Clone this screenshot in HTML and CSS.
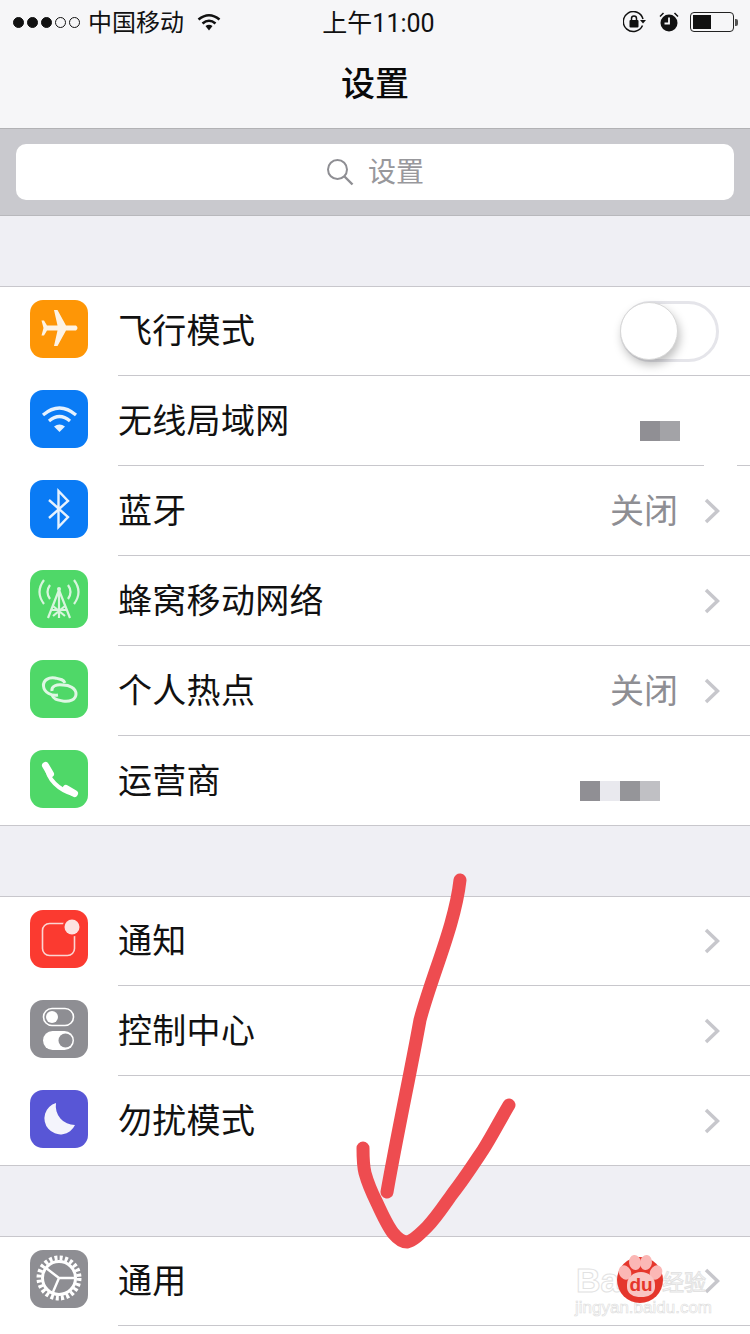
FILE: index.html
```html
<!DOCTYPE html>
<html>
<head>
	<meta charset="utf-8">
	<title>设置</title>
	<link rel="stylesheet" href="styles.css">
</head>
<body>
	<div id="page">
		<div class="top">
			<div class="status">
				<div class="status-left">
					<span class="dots">
						<i class="dot"></i><i class="dot"></i><i class="dot"></i><i class="dot off"></i><i class="dot off"></i>
					</span>
					<span class="carrier">中国移动</span>
					<svg class="st-wifi" width="24" height="18" viewBox="0 0 24 18">
						<path d="M1.500 6.500Q12-2 22.500 6.500" fill="none" stroke="#111" stroke-width="2.600"/>
						<path d="M5.500 10.500Q12 5 18.500 10.500" fill="none" stroke="#111" stroke-width="2.600"/>
						<path d="M8.500 13Q12 10.500 15.500 13L12 17.500Z" fill="#111"/>
					</svg>
				</div>
				<div class="time">上午11:00</div>
				<div class="status-right">
					<svg width="24" height="22" viewBox="0 0 24 22">
						<path d="M19.500 14.500A10 10 0 1 1 20 8" fill="none" stroke="#111" stroke-width="1.500"/>
						<path d="M17 9h6l-3 3.500Z" fill="#111"/>
						<rect x="6.500" y="9" width="9" height="7.500" rx="1" fill="#111"/>
						<path d="M8.500 9.500V7.500a2.500 2.500 0 0 1 5 0v2" fill="none" stroke="#111" stroke-width="1.500"/>
					</svg>
					<svg class="st-alarm" width="20" height="20" viewBox="0 0 20 20">
						<circle cx="10" cy="11" r="8.500" fill="#111"/>
						<path d="M10 5.500V11.500H5.500" fill="none" stroke="#f6f6f8" stroke-width="1.800"/>
						<path d="M1 4.500L4.500 1M19 4.500L15.500 1" stroke="#111" stroke-width="1.500"/>
					</svg>
					<div class="battery"><div class="battery-fill"></div></div>
					<div class="battery-nub"></div>
				</div>
			</div>
			<div class="title">设置</div>
		</div>

		<div class="search">
			<div class="search-box">
				<svg width="28" height="28" viewBox="0 0 28 28">
					<circle cx="11.500" cy="11.500" r="9.500" fill="none" stroke="#8e8e93" stroke-width="2"/>
					<path d="M18.500 18.500L26.500 26.500" stroke="#8e8e93" stroke-width="2.400"/>
				</svg>
				<span class="search-text">设置</span>
			</div>
		</div>

		<div class="group">
			<div class="row">
				<div class="icon orange">
					<svg width="58" height="58" viewBox="0 0 58 58">
						<path d="M46 25.500H36L27.500 10H24L27.500 25.500H17L14 20.500H11.500L13.500 28L11.500 35.500H14L17 30.500H27.500L24 46H27.500L36 30.500H46Q49 28 46 25.500Z" fill="#fdf3e4"/>
					</svg>
				</div>
				<div class="body">
					<span class="label">飞行模式</span>
					<div class="toggle"><div class="knob"></div></div>
				</div>
			</div>
			<div class="row">
				<div class="icon blue">
					<svg width="58" height="58" viewBox="0 0 58 58" fill="none" stroke="#e6f2fe" stroke-width="3.200">
						<path d="M13 25Q29.500 11 46 25"/>
						<path d="M19 31Q29.500 22 40 31"/>
						<path d="M24 36.500Q29.500 32.500 35 36.500L29.500 42Z" fill="#e6f2fe" stroke="none"/>
					</svg>
				</div>
				<div class="body">
					<span class="label">无线局域网</span>
					<div class="blur blur-wifi"><i class="b1"></i><i class="b2"></i></div>
				</div>
				<div class="line-gap"></div>
			</div>
			<div class="row">
				<div class="icon blue">
					<svg width="58" height="58" viewBox="0 0 58 58">
						<path d="M19 20L38 37L28.500 47V11L38 21L19 38" fill="none" stroke="#e6f2fe" stroke-width="2.400"/>
					</svg>
				</div>
				<div class="body">
					<span class="label">蓝牙</span>
					<span class="value">关闭</span>
					<svg class="chevron" width="16" height="26" viewBox="0 0 16 26"><path d="M2 2L13.500 13L2 24" /></svg>
				</div>
			</div>
			<div class="row">
				<div class="icon green">
					<svg width="58" height="58" viewBox="0 0 58 58" fill="none" stroke="#d8f5de" stroke-width="2.200">
						<path d="M29 20L18 48M29 20L40 48M29 20V48M23 36L35 46M35 36L23 46M21.500 40H36.500"/>
						<circle cx="29" cy="19" r="2" fill="#d8f5de" stroke="none"/>
						<path d="M14 10Q5 22 14 34M44 10Q53 22 44 34"/>
						<path d="M20 15Q15 22 20 29M38 15Q43 22 38 29"/>
					</svg>
				</div>
				<div class="body">
					<span class="label">蜂窝移动网络</span>
					<svg class="chevron" width="16" height="26" viewBox="0 0 16 26"><path d="M2 2L13.500 13L2 24" /></svg>
				</div>
			</div>
			<div class="row">
				<div class="icon green">
					<svg width="58" height="58" viewBox="0 0 58 58" fill="none" stroke="#dff7e4" stroke-width="3">
						<path d="M28 35C22 36 14 33 13.500 26C13 20 19 17 25 18C30 19 33 19 35 23"/>
						<path d="M22 31C21 26 27 24 33 25C39 25 46 28 46 34C46 40 39 42 33 41C28 40 24 40 22 35"/>
					</svg>
				</div>
				<div class="body">
					<span class="label">个人热点</span>
					<span class="value">关闭</span>
					<svg class="chevron" width="16" height="26" viewBox="0 0 16 26"><path d="M2 2L13.500 13L2 24" /></svg>
				</div>
			</div>
			<div class="row">
				<div class="icon green">
					<svg width="58" height="58" viewBox="0 0 58 58" fill="none" stroke="#fff" stroke-linecap="round">
						<path d="M17 17C17 29 29 40 43 44" stroke-width="4"/>
						<path d="M15.500 15.500L20.500 24" stroke-width="7"/>
						<path d="M36 38.500L44.500 43.500" stroke-width="7"/>
					</svg>
				</div>
				<div class="body">
					<span class="label">运营商</span>
					<div class="blur blur-carrier"><i class="b1"></i><i class="b3"></i><i class="b4"></i><i class="b5"></i></div>
				</div>
			</div>
		</div>

		<div class="group">
			<div class="row">
				<div class="icon red">
					<svg width="58" height="58" viewBox="0 0 58 58">
						<rect x="12.500" y="13.500" width="32" height="32" rx="7" fill="none" stroke="#fbd5d2" stroke-width="1.600"/>
						<circle cx="42" cy="17" r="9.500" fill="#fb3a30"/>
						<circle cx="42" cy="17" r="7.500" fill="#fde3e1"/>
					</svg>
				</div>
				<div class="body">
					<span class="label">通知</span>
					<svg class="chevron" width="16" height="26" viewBox="0 0 16 26"><path d="M2 2L13.500 13L2 24" /></svg>
				</div>
			</div>
			<div class="row">
				<div class="icon grey">
					<svg width="58" height="58" viewBox="0 0 58 58">
						<rect x="13.500" y="8.500" width="30" height="17" rx="8.500" fill="none" stroke="#fff" stroke-width="1.600"/>
						<circle cx="22" cy="17" r="6" fill="#fff"/>
						<rect x="13" y="31" width="31" height="19" rx="9.500" fill="#fff"/>
						<circle cx="35.500" cy="40.500" r="7" fill="#8e8e93"/>
					</svg>
				</div>
				<div class="body">
					<span class="label">控制中心</span>
					<svg class="chevron" width="16" height="26" viewBox="0 0 16 26"><path d="M2 2L13.500 13L2 24" /></svg>
				</div>
			</div>
			<div class="row">
				<div class="icon indigo">
					<svg width="58" height="58" viewBox="0 0 58 58">
						<path d="M26 13A16 16 0 1 0 45 35A19 19 0 0 1 26 13Z" fill="#f4f4fc"/>
					</svg>
				</div>
				<div class="body">
					<span class="label">勿扰模式</span>
					<svg class="chevron" width="16" height="26" viewBox="0 0 16 26"><path d="M2 2L13.500 13L2 24" /></svg>
				</div>
			</div>
		</div>

		<div class="group group-last">
			<div class="row">
				<div class="icon grey">
					<svg width="58" height="58" viewBox="0 0 58 58" fill="none" stroke="#fff">
						<circle cx="29" cy="28" r="20" stroke-width="5" stroke-dasharray="3 2.240"/>
						<circle cx="29" cy="28" r="16.500" stroke-width="3"/>
						<path d="M29 28L16 18M29 28H45M29 28L23 42" stroke-width="2.400"/>
					</svg>
				</div>
				<div class="body">
					<span class="label">通用</span>
					<svg class="chevron" width="16" height="26" viewBox="0 0 16 26"><path d="M2 2L13.500 13L2 24" /></svg>
				</div>
			</div>
		</div>

		<div class="watermark">
			<span class="wm-bai">Bai</span>
			<span class="wm-jy">经验</span>
			<span class="wm-url">jingyan.baidu.com</span>
			<div class="paw">
				<i class="toe t1"></i><i class="toe t2"></i><i class="toe t3"></i><i class="toe t4"></i>
				<div class="paw-pad"><span>du</span></div>
			</div>
		</div>

		<svg class="scribble" width="750" height="1334" viewBox="0 0 750 1334" fill="none" stroke="#ee4c50" stroke-width="13" stroke-linecap="round" stroke-linejoin="round">
			<path d="M460 880C455 925 432 975 420 1020C410 1075 398 1130 387 1192"/>
			<path d="M363 1148C363 1158 363 1165 365 1173C368 1184 372 1193 377 1203C382 1214 387 1225 393 1233C398 1239 402 1242 407 1242C413 1241 420 1234 427 1227C436 1218 445 1204 453 1193C464 1179 473 1165 483 1150C492 1136 500 1120 509 1105"/>
		</svg>
	</div>
</body>
</html>
```

FILE: styles.css
```css
* {
	padding: 0px;
	margin: 0px;
	box-sizing: border-box;
}

body {
	background-color: #fff;
	font-family: "Noto Sans CJK SC", sans-serif;
	color: #111;
}

i {
	display: block;
}

#page {
	position: relative;
	width: 750px;
	height: 1334px;
	overflow: hidden;
	background-color: #efeff4;
}

/* status bar + title */
.top {
	height: 129px;
	background-color: #f6f6f8;
	border-bottom: 1px solid #b2b2b5;
}

.status {
	display: grid;
	grid-template-columns: 1fr auto 1fr;
	align-items: center;
	height: 40px;
	padding: 0 12px 0 13px;
}

.status-left, .status-right {
	display: flex;
	align-items: center;
}

.status-right {
	justify-content: flex-end;
}

.dots {
	display: flex;
	gap: 3px;
	margin-right: 8px;
}

.dot {
	width: 11px;
	height: 11px;
	border-radius: 50%;
	background-color: #111;
	border: 1px solid #111;
}

.dot.off {
	background-color: transparent;
}

.carrier {
	font-size: 24px;
	line-height: 40px;
	padding-bottom: 2px;
}

.st-wifi {
	margin-left: 13px;
}

.time {
	font-family: Roboto, "Noto Sans CJK SC", sans-serif;
	font-size: 25px;
	line-height: 40px;
	margin-left: 6px;
	padding-top: 4px;
}

.st-alarm {
	margin-left: 12px;
}

.battery {
	width: 44px;
	height: 20px;
	margin-left: 11px;
	padding: 2px;
	border: 1px solid #222;
	border-radius: 4px;
}

.battery-fill {
	width: 18px;
	height: 100%;
	background-color: #111;
}

.battery-nub {
	width: 3px;
	height: 7px;
	margin-left: 1px;
	background-color: #555;
	border-radius: 0 2px 2px 0;
}

.title {
	height: 88px;
	line-height: 84px;
	text-align: center;
	font-size: 34px;
	font-weight: 500;
	color: #0a0a0a;
}

/* search */
.search {
	height: 87px;
	padding: 15px 16px 0;
	background-color: #c9c9ce;
	border-bottom: 1px solid #b8b8bc;
}

.search-box {
	display: flex;
	align-items: center;
	justify-content: center;
	gap: 14px;
	height: 56px;
	background-color: #fff;
	border-radius: 10px;
}

.search-text {
	font-size: 28px;
	line-height: 36px;
	padding-bottom: 4px;
	color: #98989c;
}

/* list groups */
.group {
	margin-bottom: 70px;
	background-color: #fff;
	border-top: 1px solid #c8c7cc;
	border-bottom: 1px solid #c8c7cc;
}

.search + .group {
	margin-top: 70px;
}

.group-last {
	margin-bottom: 0;
	padding-bottom: 8px;
	border-bottom: none;
}

.row {
	position: relative;
	display: flex;
	height: 90px;
	padding-left: 30px;
}

.row:first-child, .row:last-child {
	height: 89px;
}

.icon {
	flex: none;
	width: 58px;
	height: 58px;
	margin-top: 14px;
	border-radius: 13px;
}

.row:first-child .icon {
	margin-top: 13px;
}

.icon svg {
	display: block;
}

.orange {
	background-color: #fe9606;
}

.blue {
	background-color: #0a7bf5;
}

.green {
	background-color: #4fd868;
}

.red {
	background-color: #fb3a30;
}

.grey {
	background-color: #8e8e93;
}

.indigo {
	background-color: #5856d6;
}

.body {
	flex: 1;
	display: flex;
	align-items: center;
	margin-left: 30px;
	padding-right: 30px;
	border-bottom: 1px solid #c8c7cc;
}

.row:last-child .body {
	border-bottom: none;
}

.group-last .row:last-child .body {
	border-bottom: 1px solid #c8c7cc;
}

.label {
	flex: 1;
	font-size: 34px;
	line-height: 44px;
	letter-spacing: 0.3px;
	padding-bottom: 4px;
	color: #111;
}

.value {
	font-size: 34px;
	line-height: 44px;
	padding-bottom: 4px;
	color: #8e8e93;
	margin-right: 26px;
}

.chevron {
	flex: none;
}

.chevron path {
	fill: none;
	stroke: #c7c7cc;
	stroke-width: 3.500;
}

.toggle {
	position: relative;
	width: 99px;
	height: 61px;
	margin-right: 1px;
	background-color: #fff;
	border: 3px solid #e5e5ea;
	border-radius: 31px;
}

.knob {
	width: 58px;
	height: 58px;
	margin: -2px 0 0 -3px;
	background-color: #fff;
	border: 1px solid #d8d8d8;
	border-radius: 50%;
	box-shadow: 2px 5px 10px rgba(0, 0, 0, 0.25);
}

.blur {
	display: flex;
	height: 20px;
	margin-top: 20px;
}

.blur i {
	width: 20px;
	height: 20px;
}

.blur-wifi {
	margin-right: 40px;
}

.blur-carrier {
	margin-right: 60px;
}

.b1 {
	background-color: #908f94;
}

.b2 {
	background-color: #a3a3a7;
}

.b3 {
	background-color: #e9e9ee;
}

.b4 {
	background-color: #959599;
}

.b5 {
	background-color: #c0c0c4;
}

.line-gap {
	position: absolute;
	right: 13px;
	bottom: 0;
	width: 33px;
	height: 2px;
	background-color: #fff;
}

/* baidu mark */
.watermark {
	position: absolute;
	left: 570px;
	top: 1250px;
	width: 150px;
	height: 70px;
}

.wm-bai, .wm-jy, .wm-url {
	position: absolute;
	color: #fff;
	-webkit-text-stroke: 1px #e2e2e2;
	white-space: nowrap;
}

.wm-bai {
	left: 6px;
	top: 11px;
	font-family: "Liberation Sans", sans-serif;
	font-size: 34px;
	font-weight: bold;
	line-height: 38px;
}

.wm-jy {
	left: 92px;
	top: 16px;
	font-size: 22px;
	line-height: 28px;
}

.wm-url {
	left: 5px;
	top: 48px;
	font-family: "Liberation Sans", sans-serif;
	font-size: 17px;
	line-height: 20px;
	-webkit-text-stroke: 0.6px #dcdcdc;
}

.paw {
	position: absolute;
	left: 47px;
	top: 7px;
	width: 46px;
	height: 46px;
	background-color: #e5362c;
	border-radius: 50%;
}

.toe {
	position: absolute;
	width: 12px;
	height: 15px;
	background-color: #fbb7b5;
	border-radius: 50%;
}

.t1 {
	left: 2px;
	top: 8px;
	transform: rotate(-25deg);
}

.t2 {
	left: 12px;
	top: -2px;
	transform: rotate(-8deg);
}

.t3 {
	left: 23px;
	top: -2px;
	transform: rotate(8deg);
}

.t4 {
	left: 33px;
	top: 8px;
	transform: rotate(25deg);
}

.paw-pad {
	position: absolute;
	left: 10px;
	top: 15px;
	width: 28px;
	height: 25px;
	background-color: #f9c6c4;
	border-radius: 50% 50% 40% 40%;
	text-align: center;
}

.paw-pad span {
	font-family: "Liberation Sans", sans-serif;
	font-size: 19px;
	font-weight: bold;
	line-height: 26px;
	color: #e5362c;
}

.scribble {
	position: absolute;
	left: 0;
	top: 0;
}
```
